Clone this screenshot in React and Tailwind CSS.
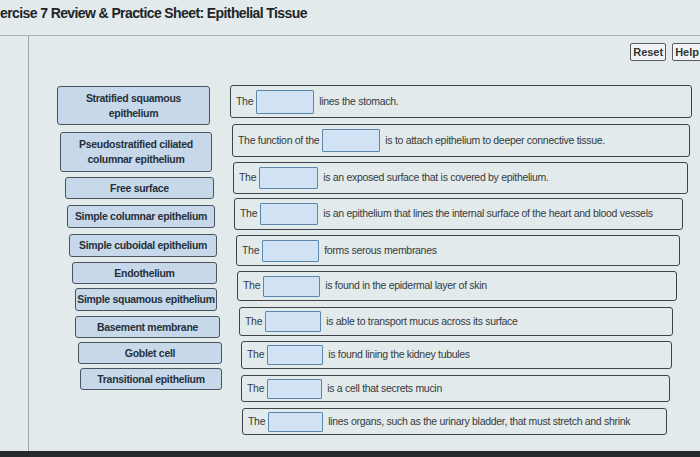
const labels = [
  { text: "Stratified squamous epithelium", cls: "mt-[1px] ml-[28px] w-[153px] h-[39px] px-5" },
  { text: "Pseudostratified ciliated columnar epithelium", cls: "mt-[7px] ml-[31px] w-[152px] h-[40px] px-3" },
  { text: "Free surface", cls: "mt-[5px] ml-[36px] w-[149px] h-[22px] whitespace-nowrap" },
  { text: "Simple columnar epithelium", cls: "mt-[6px] ml-[38px] w-[148px] h-[23px] whitespace-nowrap" },
  { text: "Simple cuboidal epithelium", cls: "mt-[6px] ml-[40px] w-[148px] h-[23px] whitespace-nowrap" },
  { text: "Endothelium", cls: "mt-[5px] ml-[43px] w-[145px] h-[22px] whitespace-nowrap" },
  { text: "Simple squamous epithelium", cls: "mt-[4px] ml-[46px] w-[142px] h-[23px] whitespace-nowrap" },
  { text: "Basement membrane", cls: "mt-[5px] ml-[46px] w-[145px] h-[22px] whitespace-nowrap" },
  { text: "Goblet cell", cls: "mt-[4px] ml-[49px] w-[144px] h-[22px] whitespace-nowrap" },
  { text: "Transitional epithelium", cls: "mt-[4px] ml-[51px] w-[142px] h-[22px] whitespace-nowrap" },
];

const rows = [
  { pre: "The", post: "lines the stomach.", cls: "mt-0 ml-[1px] w-[462px] h-[33px]", box: "w-[58px] h-[24px]" },
  { pre: "The function of the", post: "is to attach epithelium to deeper connective tissue.", cls: "mt-[6px] ml-[3px] w-[458px] h-[33px]", box: "w-[58px] h-[23px]" },
  { pre: "The", post: "is an exposed surface that is covered by epithelium.", cls: "mt-[5px] ml-[4px] w-[455px] h-[32px]", box: "w-[59px] h-[22px]" },
  { pre: "The", post: "is an epithelium that lines the internal surface of the heart and blood vessels", cls: "mt-[4px] ml-[5px] w-[449px] h-[32px]", box: "w-[58px] h-[22px]" },
  { pre: "The", post: "forms serous membranes", cls: "mt-[5px] ml-[7px] w-[444px] h-[31px]", box: "w-[57px] h-[22px]" },
  { pre: "The", post: "is found in the epidermal layer of skin", cls: "mt-[5px] ml-[8px] w-[440px] h-[30px]", box: "w-[57px] h-[21px]" },
  { pre: "The", post: "is able to transport mucus across its surface", cls: "mt-[6px] ml-[10px] w-[434px] h-[29px]", box: "w-[56px] h-[21px]" },
  { pre: "The", post: "is found lining the kidney tubules", cls: "mt-[5px] ml-[12px] w-[431px] h-[28px]", box: "w-[56px] h-[20px]" },
  { pre: "The", post: "is a cell that secrets mucin", cls: "mt-[6px] ml-[12px] w-[429px] h-[27px]", box: "w-[55px] h-[20px]" },
  { pre: "The", post: "lines organs, such as the urinary bladder, that must stretch and shrink", cls: "mt-[6px] ml-[13px] w-[425px] h-[27px]", box: "w-[55px] h-[20px]" },
];

function Label({ text, cls }) {
  return (
    <div
      className={`${cls} flex items-center justify-center rounded-[3px] border-[1.5px] border-[#4b545c] bg-[#c6d8ea] text-center text-[10.5px] font-bold leading-[15px] tracking-[-0.3px] text-[#27303a]`}
    >
      {text}
    </div>
  );
}

function Row({ pre, post, cls, box }) {
  return (
    <div
      className={`${cls} flex items-center rounded-[3px] border-[1.5px] border-[#3e4448] pl-[5px] text-[10.5px] tracking-[-0.3px] text-[#353b40]`}
    >
      <span>{pre}</span>
      <div className={`${box} ml-[3px] shrink-0 rounded-[1px] border-[1.5px] border-[#5b87aa] bg-[#d0e2f4]`} />
      <span className="ml-[5px] whitespace-nowrap">{post}</span>
    </div>
  );
}

export default function App() {
  return (
    <div className="flex h-[457px] w-[700px] flex-col overflow-hidden bg-[#e2eaeb] font-['Liberation_Sans',Arial,sans-serif]">
      <div className="h-[36px] shrink-0 border-b border-[#aab4b7] pt-[6px] text-[14px] font-bold leading-[14px] tracking-[-0.6px] text-[#1f2427]">
        ercise 7 Review &amp; Practice Sheet: Epithelial Tissue
      </div>

      <div className="ml-[28px] flex flex-1 flex-col border-l border-[#9ea8ab]">
        <div className="mr-[-2px] flex justify-end gap-[6px] pt-[7px]">
          <button className="h-[18px] rounded-[2px] border border-[#555c60] bg-[#f3f5f5] px-[2px] text-[11px] font-bold leading-[16px] text-[#2e3438]">
            Reset
          </button>
          <button className="h-[18px] rounded-[2px] border border-[#555c60] bg-[#f3f5f5] px-[2px] text-[11px] font-bold leading-[16px] text-[#2e3438]">
            Help
          </button>
        </div>

        <div className="flex items-start pt-[24px]">
          <div className="flex w-[200px] shrink-0 flex-col">
            {labels.map((l) => (
              <Label key={l.text} {...l} />
            ))}
          </div>
          <div className="flex flex-col">
            {rows.map((r) => (
              <Row key={r.post} {...r} />
            ))}
          </div>
        </div>
      </div>

      <div className="h-[6px] shrink-0 bg-[#26292b]" />
    </div>
  );
}
